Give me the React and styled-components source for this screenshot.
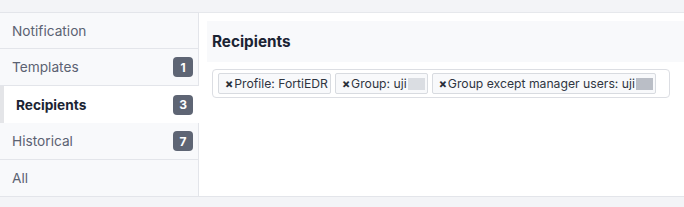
import React from "react";
import styled, { createGlobalStyle } from "styled-components";

const GlobalStyle = createGlobalStyle`
  html, body {
    margin: 0;
    padding: 0;
    background: #f3f4f7;
    font-family: Inter, "Noto Sans", sans-serif;
  }
`;

const Page = styled.div`
  padding-top: 12px;
  height: 207px;
  box-sizing: border-box;
  display: flex;
  align-items: flex-start;
`;

const Sidebar = styled.div`
  width: 199px;
  flex-shrink: 0;
  display: flex;
  flex-direction: column;
`;

const NavItem = styled.div`
  height: 37px;
  box-sizing: border-box;
  display: flex;
  align-items: center;
  justify-content: space-between;
  padding: 0 5px 0 12px;
  font-size: 13.7px;
  color: #5b6272;
  background: #f8f9fb;
  border: 1px solid #e3e5ea;
  border-left: none;
  border-top: ${p => (p.$first ? "1px solid #e3e5ea" : "none")};

  ${p =>
    p.$active &&
    `
    background: #ffffff;
    border-left: 4px solid #e4e5e8;
    border-right: none;
    border-bottom: none;
    padding-left: 12px;
    padding-right: 6px;
    font-weight: 700;
    color: #1b2433;
  `}
`;

const Badge = styled.span`
  min-width: 20px;
  height: 20px;
  border-radius: 4px;
  background: #5e6574;
  color: #ffffff;
  font-size: 12px;
  font-weight: 700;
  display: flex;
  align-items: center;
  justify-content: center;
`;

const Panel = styled.div`
  flex: 1;
  min-width: 0;
  height: 185px;
  box-sizing: border-box;
  background: #ffffff;
  border-top: 1px solid #e6e8ec;
  border-bottom: 1px solid #e3e5ea;
  padding: 8px 0 0 8px;
`;

const Header = styled.div`
  background: #f8f9fb;
  height: 41px;
  display: flex;
  align-items: center;
  padding-left: 5px;
  font-size: 15.3px;
  font-weight: 700;
  color: #1b2433;
`;

const TagBox = styled.div`
  margin: 7px 14px 0 5px;
  border: 1px solid #dcdee3;
  border-radius: 4px;
  padding: 3px 5px;
  display: flex;
  gap: 4px;
  align-items: center;
`;

const Tag = styled.div`
  height: 21px;
  box-sizing: border-box;
  border: 1px solid #d8dbe0;
  border-radius: 2px;
  background: #f8f9fb;
  display: flex;
  align-items: center;
  padding: 0 2px 0 6px;
  font-size: 12.2px;
  color: #2f3541;
  white-space: nowrap;
`;

const Remove = styled.span`
  font-weight: 800;
  font-size: 12px;
  color: #2a2f3a;
  margin-right: 1px;
`;

const Redacted = styled.span`
  display: inline-block;
  width: 17px;
  height: 12px;
  margin-left: 1px;
  background: ${p => p.$color};
`;

const navItems = [
  { label: "Notification" },
  { label: "Templates", count: 1 },
  { label: "Recipients", count: 3, active: true },
  { label: "Historical", count: 7 },
  { label: "All" },
];

const tags = [
  { text: "Profile: FortiEDR" },
  { text: "Group: uji", redact: "#dadde2" },
  { text: "Group except manager users: uji", redact: "#babec6" },
];

export default function App() {
  return (
    <>
      <GlobalStyle />
      <Page>
        <Sidebar>
          {navItems.map((item, i) => (
            <NavItem key={item.label} $active={item.active} $first={i === 0}>
              <span>{item.label}</span>
              {item.count && <Badge>{item.count}</Badge>}
            </NavItem>
          ))}
        </Sidebar>
        <Panel>
          <Header>Recipients</Header>
          <TagBox>
            {tags.map(t => (
              <Tag key={t.text}>
                <Remove>×</Remove>
                {t.text}
                {t.redact && <Redacted $color={t.redact} />}
              </Tag>
            ))}
          </TagBox>
        </Panel>
      </Page>
    </>
  );
}
